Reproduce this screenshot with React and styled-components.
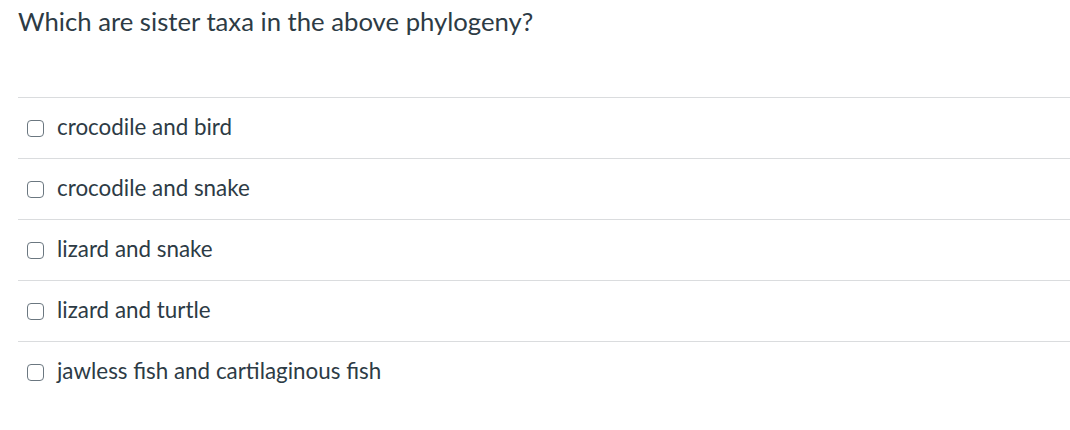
import React from "react";
import styled, { createGlobalStyle } from "styled-components";

const Global = createGlobalStyle`
  html, body { margin: 0; padding: 0; background: #fff; }
  body { font-family: Lato, "Open Sans", sans-serif; color: #2d3b45; }
`;

const Page = styled.div`
  padding: 3px 0 0 18px;
`;

const Question = styled.div`
  font-size: 25.7px;
  line-height: 36px;
  margin: 0 0 58px;
`;

const Answers = styled.div`
  display: flex;
  flex-direction: column;
`;

const Row = styled.label`
  display: flex;
  align-items: center;
  height: 60px;
  border-top: 1px solid #dadcde;
  padding-left: 9px;
  gap: 13px;
  font-size: 22.4px;
`;

const Box = styled.span`
  width: 15px;
  height: 15px;
  border: 1.5px solid #6b7780;
  border-radius: 4px;
  box-sizing: content-box;
  flex: none;
  background: #fff;
`;

const Text = styled.span`
  line-height: 26px;
  margin-top: -2px;
`;

const answers = [
  "crocodile and bird",
  "crocodile and snake",
  "lizard and snake",
  "lizard and turtle",
  "jawless fish and cartilaginous fish",
];

export default function App() {
  return (
    <Page>
      <Global />
      <Question>Which are sister taxa in the above phylogeny?</Question>
      <Answers>
        {answers.map((a) => (
          <Row key={a}>
            <Box />
            <Text>{a}</Text>
          </Row>
        ))}
      </Answers>
    </Page>
  );
}
